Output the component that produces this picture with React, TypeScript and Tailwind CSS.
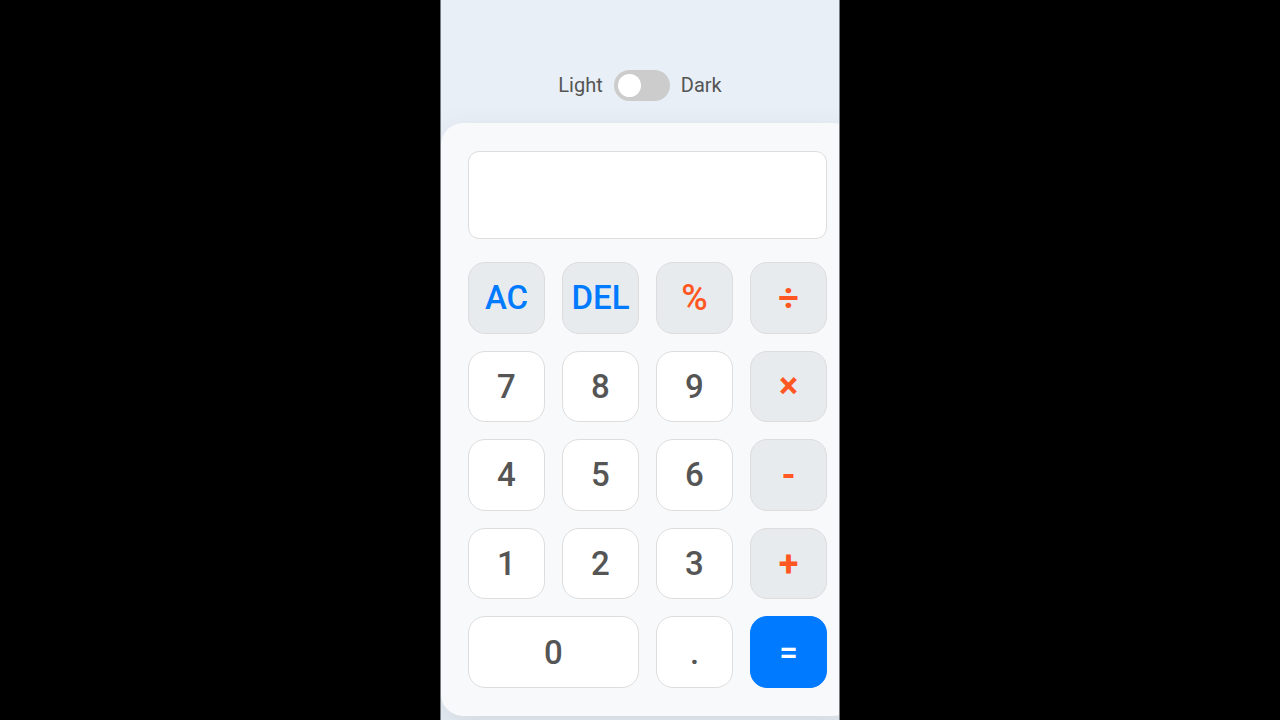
import React, { useState } from "react";

type KeyKind = "digit" | "action" | "percent" | "operator" | "equals";

interface CalcKey {
  label: string;
  kind: KeyKind;
  wide?: boolean;
}

const keys: CalcKey[] = [
  { label: "AC", kind: "action" },
  { label: "DEL", kind: "action" },
  { label: "%", kind: "percent" },
  { label: "÷", kind: "operator" },
  { label: "7", kind: "digit" },
  { label: "8", kind: "digit" },
  { label: "9", kind: "digit" },
  { label: "×", kind: "operator" },
  { label: "4", kind: "digit" },
  { label: "5", kind: "digit" },
  { label: "6", kind: "digit" },
  { label: "-", kind: "operator" },
  { label: "1", kind: "digit" },
  { label: "2", kind: "digit" },
  { label: "3", kind: "digit" },
  { label: "+", kind: "operator" },
  { label: "0", kind: "digit", wide: true },
  { label: ".", kind: "digit" },
  { label: "=", kind: "equals" },
];

const keyStyles: Record<KeyKind, string> = {
  digit: "bg-white border-[#dddddd] text-[#555555] text-[33px] font-medium",
  action: "bg-[#e8ebee] border-[#dddddd] text-[#007bff] text-[33px] font-medium",
  percent: "bg-[#e8ebee] border-[#dddddd] text-[#ff5722] text-[36px] font-medium",
  operator: "bg-[#e8ebee] border-[#dddddd] text-[#ff5722] text-[36px] font-bold",
  equals: "bg-[#007bff] border-[#007bff] text-white text-[33px] font-medium",
};

const App = () => {
  const [value, setValue] = useState("");
  const [dark, setDark] = useState(false);

  const calculate = () => {
    // left to right, no precedence
    const parts = value.match(/\d*\.?\d+|[÷×+%-]/g) ?? [];
    let total = Number(parts[0] ?? 0);
    for (let i = 1; i < parts.length - 1; i += 2) {
      const next = Number(parts[i + 1]);
      if (parts[i] === "÷") total /= next;
      if (parts[i] === "×") total *= next;
      if (parts[i] === "+") total += next;
      if (parts[i] === "-") total -= next;
      if (parts[i] === "%") total %= next;
    }
    return String(total);
  };

  const handleKey = (label: string) => {
    if (label === "AC") setValue("");
    else if (label === "DEL") setValue(value.slice(0, -1));
    else if (label === "=") setValue(value ? calculate() : "");
    else setValue(value + label);
  };

  return (
    <div className="h-screen overflow-hidden bg-black flex justify-center font-[Roboto,sans-serif]">
      <main
        className={`w-full max-w-[400px] overflow-hidden border-x border-[#777b80] pt-[70px] ${
          dark ? "bg-[#1e1e1e]" : "bg-[#e8eff7]"
        }`}
      >
        <label
          className={`flex items-center justify-center gap-[11px] text-[20px] leading-[31px] cursor-pointer ${
            dark ? "text-[#dddddd]" : "text-[#555555]"
          }`}
        >
          <span>Light</span>
          <input
            type="checkbox"
            role="switch"
            aria-label="Dark mode"
            checked={dark}
            onChange={(e) => setDark(e.target.checked)}
            className="appearance-none flex items-center w-14 h-[31px] p-1 rounded-full bg-[#cccccc] checked:bg-[#007bff] checked:justify-end before:content-[''] before:size-[23px] before:rounded-full before:bg-white"
          />
          <span>Dark</span>
        </label>

        <section
          className={`mt-[22px] w-max rounded-[22px] py-7 pl-[27px] pr-7 shadow-[0_11px_33px_rgba(0,0,0,0.1)] ${
            dark ? "bg-[#2b2b2b]" : "bg-[#f8f9fb]"
          }`}
        >
          <input
            type="text"
            size={1}
            readOnly
            aria-label="Result"
            value={value}
            className="block w-full h-[88px] px-4 rounded-[11px] border border-[#dddddd] bg-white text-right text-[40px] text-[#555555]"
          />
          <div className="mt-[23px] grid grid-cols-[repeat(4,77px)] grid-rows-5 gap-[17px] h-[426px]">
            {keys.map((key) => (
              <button
                key={key.label}
                type="button"
                onClick={() => handleKey(key.label)}
                className={`flex items-center justify-center rounded-[17px] border leading-none cursor-pointer ${
                  keyStyles[key.kind]
                } ${key.wide ? "col-span-2" : ""}`}
              >
                {key.label}
              </button>
            ))}
          </div>
        </section>
      </main>
    </div>
  );
};

export default App;
